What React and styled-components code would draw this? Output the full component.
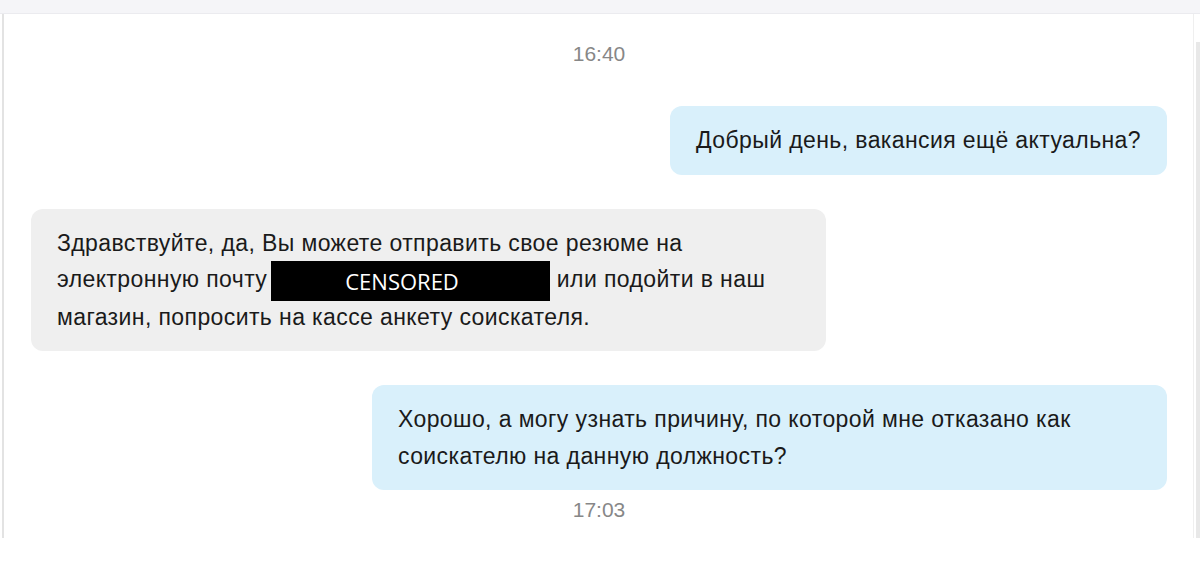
import React from 'react';
import styled, { createGlobalStyle } from 'styled-components';

const messages = [
  { id: 1, time: '16:40' },
  { id: 2, own: true, text: 'Добрый день, вакансия ещё актуальна?' },
  {
    id: 3,
    parts: [
      'Здравствуйте, да, Вы можете отправить свое резюме на электронную почту ',
      { censored: 'CENSORED' },
      ' или подойти в наш магазин, попросить на кассе анкету соискателя.',
    ],
  },
  {
    id: 4,
    own: true,
    text: 'Хорошо, а могу узнать причину, по которой мне отказано как соискателю на данную должность?',
  },
  { id: 5, time: '17:03', tight: true },
];

const App = () => {
  return (
    <>
      <GlobalStyle />
      <Window>
        <TopBar />
        <Body>
          <Chat>
            {messages.map(m => {
              if (m.time) {
                return (
                  <Time key={m.id} tight={m.tight}>
                    {m.time}
                  </Time>
                );
              }
              return (
                <Row key={m.id} own={m.own}>
                  <Bubble own={m.own}>
                    {m.text ||
                      m.parts.map((p, i) =>
                        typeof p === 'string' ? p : <Censor key={i}>{p.censored}</Censor>
                      )}
                  </Bubble>
                </Row>
              );
            })}
          </Chat>
          <Track>
            <Thumb />
          </Track>
        </Body>
      </Window>
    </>
  );
};

export default App;

const GlobalStyle = createGlobalStyle`
  body {
    margin: 0;
    background: #ffffff;
    font-family: "Liberation Sans", Arial, sans-serif;
  }
`;

const Window = styled.div`
  display: flex;
  flex-direction: column;
  height: 538px;
`;

const TopBar = styled.div`
  height: 13px;
  background: #f5f5f8;
  border-bottom: 1px solid #ebebef;
`;

const Body = styled.div`
  flex: 1;
  display: flex;
  min-height: 0;
`;

const Chat = styled.div`
  flex: 1;
  margin-left: 2px;
  border-left: 2px solid #e3e3e3;
  border-right: 1px solid #efefef;
  padding: 28px 26px 0 27px;
  display: flex;
  flex-direction: column;
`;

const Time = styled.div`
  text-align: center;
  font-size: 21px;
  line-height: 24px;
  color: #878787;
  margin: ${({ tight }) => (tight ? '8px 0 0' : '0 0 40px')};
`;

const Row = styled.div`
  display: flex;
  justify-content: ${({ own }) => (own ? 'flex-end' : 'flex-start')};
  margin-bottom: 34px;

  &:has(+ ${Time}) {
    margin-bottom: 0;
  }
`;

const Bubble = styled.div`
  max-width: 795px;
  box-sizing: border-box;
  padding: 16px 26px;
  border-radius: 12px;
  background: ${({ own }) => (own ? '#d9f0fb' : '#efefef')};
  color: #1a1a1a;
  font-size: 23px;
  letter-spacing: 0.4px;
  line-height: 36.5px;
`;

const Censor = styled.span`
  display: inline-block;
  box-sizing: border-box;
  width: 279px;
  height: 40px;
  margin: -2px 0 -2px -3px;
  padding-right: 17px;
  vertical-align: middle;
  background: #000000;
  color: #ffffff;
  font-family: "Open Sans", sans-serif;
  font-size: 22px;
  letter-spacing: 0;
  line-height: 40px;
  text-align: center;
`;

const Track = styled.div`
  width: 6px;
  display: flex;
  padding-top: 28px;
`;

const Thumb = styled.div`
  flex: 1;
  margin-left: 2px;
  background: #e8e8e8;
`;
